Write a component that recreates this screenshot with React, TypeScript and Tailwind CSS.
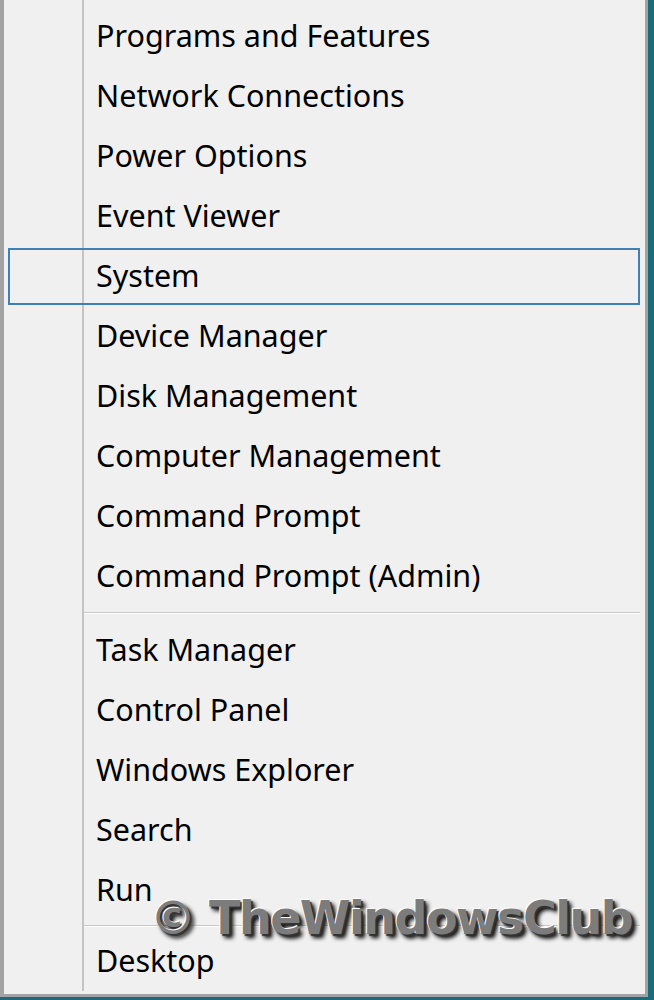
import React from 'react';

const groups: string[][] = [
  [
    'Programs and Features',
    'Network Connections',
    'Power Options',
    'Event Viewer',
    'System',
    'Device Manager',
    'Disk Management',
    'Computer Management',
    'Command Prompt',
    'Command Prompt (Admin)',
  ],
  ['Task Manager', 'Control Panel', 'Windows Explorer', 'Search', 'Run'],
  ['Desktop'],
];

function MenuRow({ label, active }: { label: string; active?: boolean }) {
  return (
    <div className="relative flex h-[60px]">
      <div className="w-[80px] shrink-0 border-r-2 border-[#c4c4c4]" />
      <div className="flex items-center whitespace-nowrap pl-[12px] text-[30.5px] text-black">{label}</div>
      {active && (
        <div className="absolute left-[4px] right-[5px] top-[2px] bottom-[1px] border-2 border-[#3f80b6]" />
      )}
    </div>
  );
}

function Separator({ height }: { height: string }) {
  return (
    <div className={`flex ${height}`}>
      <div className="w-[80px] shrink-0 border-r-2 border-[#c4c4c4]" />
      <div className="flex flex-1 items-center pr-[5px]">
        <div className="h-[2px] w-full border-t border-[#c8c8c8] border-b border-b-white" />
      </div>
    </div>
  );
}

export default function App() {
  return (
    <div className="flex h-[1000px] w-[654px] bg-[#1c6b78]" style={{ fontFamily: '"Noto Sans", "Open Sans", sans-serif' }}>
      <div className="relative flex h-[997px] w-[648px] flex-col border-l-4 border-r-[3px] border-b-[3px] border-[#a3a3a3] bg-[#f0f0f0]">
        <div className="flex h-[6px]">
          <div className="w-[80px] shrink-0 border-r-2 border-[#c4c4c4]" />
        </div>
        {groups[0].map((item) => (
          <MenuRow key={item} label={item} active={item === 'System'} />
        ))}
        <Separator height="h-[14px]" />
        {groups[1].map((item) => (
          <MenuRow key={item} label={item} />
        ))}
        <Separator height="h-[11px]" />
        {groups[2].map((item) => (
          <MenuRow key={item} label={item} />
        ))}
        <div className="flex flex-1">
          <div className="w-[80px] shrink-0" />
        </div>

        {/* watermark */}
        <div
          className="pointer-events-none absolute left-[146px] top-[884px] whitespace-nowrap text-[46px] font-bold tracking-[-1.5px] text-[#7c7c7c]"
          style={{
            fontFamily: '"DejaVu Sans", Verdana, sans-serif',
            textShadow: '-1px -1px 0 #ffffff, 2px 2px 1px #333333, 4px 4px 4px #000000',
          }}
        >
          © TheWindowsClub
        </div>
      </div>
    </div>
  );
}
